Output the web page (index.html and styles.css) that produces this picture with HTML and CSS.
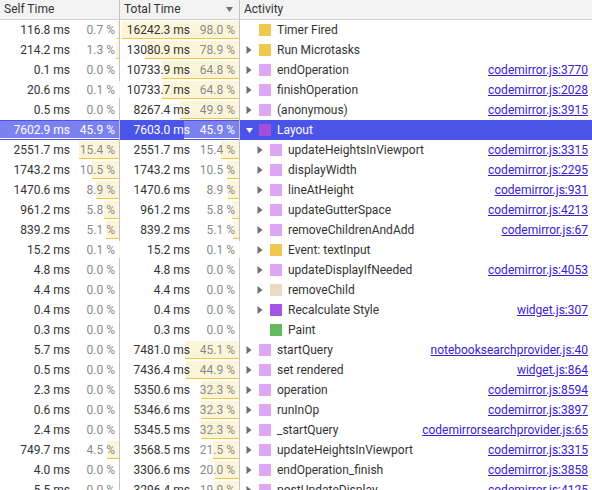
FILE: index.html
```html
<!DOCTYPE html>
<html lang="en">
<head>
    <meta charset="UTF-8">
    <title>Bottom-Up</title>
    <link rel="stylesheet" href="styles.css">
</head>
<body>
    <div class="tree">
        <div class="row head">
            <div class="cell title">Self Time</div>
            <div class="cell title sorted">Total Time
                <svg class="sort" width="7" height="5" viewBox="0 0 7 5"><path d="M0 0H7L3.5 5z"/></svg>
            </div>
            <div class="cell title">Activity</div>
        </div>

        <div class="row">
            <div class="cell num"><div class="bar" style="width:1.53%"></div><span class="ms">116.8 ms</span><span class="pct">0.7 %</span></div>
            <div class="cell num"><div class="bar" style="width:98%"></div><span class="ms">16242.3 ms</span><span class="pct">98.0 %</span></div>
            <div class="cell act"><span class="toggle"></span><span class="swatch yellow"></span><span class="name">Timer Fired</span></div>
        </div>
        <div class="row">
            <div class="cell num"><div class="bar" style="width:2.83%"></div><span class="ms">214.2 ms</span><span class="pct">1.3 %</span></div>
            <div class="cell num"><div class="bar" style="width:78.9%"></div><span class="ms">13080.9 ms</span><span class="pct">78.9 %</span></div>
            <div class="cell act"><span class="toggle"><svg width="6" height="8" viewBox="0 0 6 8"><path d="M0.5 0L5.5 4L0.5 8z"/></svg></span><span class="swatch yellow"></span><span class="name">Run Microtasks</span></div>
        </div>
        <div class="row">
            <div class="cell num"><span class="ms">0.1 ms</span><span class="pct">0.0 %</span></div>
            <div class="cell num"><div class="bar" style="width:64.8%"></div><span class="ms">10733.9 ms</span><span class="pct">64.8 %</span></div>
            <div class="cell act"><span class="toggle"><svg width="6" height="8" viewBox="0 0 6 8"><path d="M0.5 0L5.5 4L0.5 8z"/></svg></span><span class="swatch js"></span><span class="name">endOperation</span><a class="link" href="#">codemirror.js:3770</a></div>
        </div>
        <div class="row">
            <div class="cell num"><div class="bar" style="width:0.22%"></div><span class="ms">20.6 ms</span><span class="pct">0.1 %</span></div>
            <div class="cell num"><div class="bar" style="width:64.8%"></div><span class="ms">10733.7 ms</span><span class="pct">64.8 %</span></div>
            <div class="cell act"><span class="toggle"><svg width="6" height="8" viewBox="0 0 6 8"><path d="M0.5 0L5.5 4L0.5 8z"/></svg></span><span class="swatch js"></span><span class="name">finishOperation</span><a class="link" href="#">codemirror.js:2028</a></div>
        </div>
        <div class="row">
            <div class="cell num"><span class="ms">0.5 ms</span><span class="pct">0.0 %</span></div>
            <div class="cell num"><div class="bar" style="width:49.9%"></div><span class="ms">8267.4 ms</span><span class="pct">49.9 %</span></div>
            <div class="cell act"><span class="toggle"><svg width="6" height="8" viewBox="0 0 6 8"><path d="M0.5 0L5.5 4L0.5 8z"/></svg></span><span class="swatch js"></span><span class="name">(anonymous)</span><a class="link" href="#">codemirror.js:3915</a></div>
        </div>
        <div class="row selected">
            <div class="cell num"><div class="bar" style="width:100%"></div><span class="ms">7602.9 ms</span><span class="pct">45.9 %</span></div>
            <div class="cell num"><div class="bar" style="width:45.9%"></div><span class="ms">7603.0 ms</span><span class="pct">45.9 %</span></div>
            <div class="cell act"><span class="toggle"><svg width="7" height="5" viewBox="0 0 7 5"><path d="M0 0H7L3.5 5z"/></svg></span><span class="swatch layout"></span><span class="name">Layout</span></div>
        </div>
        <div class="row">
            <div class="cell num"><div class="bar" style="width:33.55%"></div><span class="ms">2551.7 ms</span><span class="pct">15.4 %</span></div>
            <div class="cell num"><div class="bar" style="width:15.4%"></div><span class="ms">2551.7 ms</span><span class="pct">15.4 %</span></div>
            <div class="cell act child"><span class="toggle"><svg width="6" height="8" viewBox="0 0 6 8"><path d="M0.5 0L5.5 4L0.5 8z"/></svg></span><span class="swatch js"></span><span class="name">updateHeightsInViewport</span><a class="link" href="#">codemirror.js:3315</a></div>
        </div>
        <div class="row">
            <div class="cell num"><div class="bar" style="width:22.88%"></div><span class="ms">1743.2 ms</span><span class="pct">10.5 %</span></div>
            <div class="cell num"><div class="bar" style="width:10.5%"></div><span class="ms">1743.2 ms</span><span class="pct">10.5 %</span></div>
            <div class="cell act child"><span class="toggle"><svg width="6" height="8" viewBox="0 0 6 8"><path d="M0.5 0L5.5 4L0.5 8z"/></svg></span><span class="swatch js"></span><span class="name">displayWidth</span><a class="link" href="#">codemirror.js:2295</a></div>
        </div>
        <div class="row">
            <div class="cell num"><div class="bar" style="width:19.39%"></div><span class="ms">1470.6 ms</span><span class="pct">8.9 %</span></div>
            <div class="cell num"><div class="bar" style="width:8.9%"></div><span class="ms">1470.6 ms</span><span class="pct">8.9 %</span></div>
            <div class="cell act child"><span class="toggle"><svg width="6" height="8" viewBox="0 0 6 8"><path d="M0.5 0L5.5 4L0.5 8z"/></svg></span><span class="swatch js"></span><span class="name">lineAtHeight</span><a class="link" href="#">codemirror.js:931</a></div>
        </div>
        <div class="row">
            <div class="cell num"><div class="bar" style="width:12.64%"></div><span class="ms">961.2 ms</span><span class="pct">5.8 %</span></div>
            <div class="cell num"><div class="bar" style="width:5.8%"></div><span class="ms">961.2 ms</span><span class="pct">5.8 %</span></div>
            <div class="cell act child"><span class="toggle"><svg width="6" height="8" viewBox="0 0 6 8"><path d="M0.5 0L5.5 4L0.5 8z"/></svg></span><span class="swatch js"></span><span class="name">updateGutterSpace</span><a class="link" href="#">codemirror.js:4213</a></div>
        </div>
        <div class="row">
            <div class="cell num"><div class="bar" style="width:11.11%"></div><span class="ms">839.2 ms</span><span class="pct">5.1 %</span></div>
            <div class="cell num"><div class="bar" style="width:5.1%"></div><span class="ms">839.2 ms</span><span class="pct">5.1 %</span></div>
            <div class="cell act child"><span class="toggle"><svg width="6" height="8" viewBox="0 0 6 8"><path d="M0.5 0L5.5 4L0.5 8z"/></svg></span><span class="swatch js"></span><span class="name">removeChildrenAndAdd</span><a class="link" href="#">codemirror.js:67</a></div>
        </div>
        <div class="row">
            <div class="cell num"><div class="bar" style="width:0.22%"></div><span class="ms">15.2 ms</span><span class="pct">0.1 %</span></div>
            <div class="cell num"><div class="bar" style="width:0.1%"></div><span class="ms">15.2 ms</span><span class="pct">0.1 %</span></div>
            <div class="cell act child"><span class="toggle"><svg width="6" height="8" viewBox="0 0 6 8"><path d="M0.5 0L5.5 4L0.5 8z"/></svg></span><span class="swatch yellow"></span><span class="name">Event: textInput</span></div>
        </div>
        <div class="row">
            <div class="cell num"><span class="ms">4.8 ms</span><span class="pct">0.0 %</span></div>
            <div class="cell num"><span class="ms">4.8 ms</span><span class="pct">0.0 %</span></div>
            <div class="cell act child"><span class="toggle"><svg width="6" height="8" viewBox="0 0 6 8"><path d="M0.5 0L5.5 4L0.5 8z"/></svg></span><span class="swatch js"></span><span class="name">updateDisplayIfNeeded</span><a class="link" href="#">codemirror.js:4053</a></div>
        </div>
        <div class="row">
            <div class="cell num"><span class="ms">4.4 ms</span><span class="pct">0.0 %</span></div>
            <div class="cell num"><span class="ms">4.4 ms</span><span class="pct">0.0 %</span></div>
            <div class="cell act child"><span class="toggle"><svg width="6" height="8" viewBox="0 0 6 8"><path d="M0.5 0L5.5 4L0.5 8z"/></svg></span><span class="swatch dom"></span><span class="name">removeChild</span></div>
        </div>
        <div class="row">
            <div class="cell num"><span class="ms">0.4 ms</span><span class="pct">0.0 %</span></div>
            <div class="cell num"><span class="ms">0.4 ms</span><span class="pct">0.0 %</span></div>
            <div class="cell act child"><span class="toggle"><svg width="6" height="8" viewBox="0 0 6 8"><path d="M0.5 0L5.5 4L0.5 8z"/></svg></span><span class="swatch style"></span><span class="name">Recalculate Style</span><a class="link" href="#">widget.js:307</a></div>
        </div>
        <div class="row">
            <div class="cell num"><span class="ms">0.3 ms</span><span class="pct">0.0 %</span></div>
            <div class="cell num"><span class="ms">0.3 ms</span><span class="pct">0.0 %</span></div>
            <div class="cell act child"><span class="toggle"></span><span class="swatch paint"></span><span class="name">Paint</span></div>
        </div>
        <div class="row">
            <div class="cell num"><span class="ms">5.7 ms</span><span class="pct">0.0 %</span></div>
            <div class="cell num"><div class="bar" style="width:45.1%"></div><span class="ms">7481.0 ms</span><span class="pct">45.1 %</span></div>
            <div class="cell act"><span class="toggle"><svg width="6" height="8" viewBox="0 0 6 8"><path d="M0.5 0L5.5 4L0.5 8z"/></svg></span><span class="swatch js"></span><span class="name">startQuery</span><a class="link" href="#">notebooksearchprovider.js:40</a></div>
        </div>
        <div class="row">
            <div class="cell num"><span class="ms">0.5 ms</span><span class="pct">0.0 %</span></div>
            <div class="cell num"><div class="bar" style="width:44.9%"></div><span class="ms">7436.4 ms</span><span class="pct">44.9 %</span></div>
            <div class="cell act"><span class="toggle"><svg width="6" height="8" viewBox="0 0 6 8"><path d="M0.5 0L5.5 4L0.5 8z"/></svg></span><span class="swatch js"></span><span class="name">set rendered</span><a class="link" href="#">widget.js:864</a></div>
        </div>
        <div class="row">
            <div class="cell num"><span class="ms">2.3 ms</span><span class="pct">0.0 %</span></div>
            <div class="cell num"><div class="bar" style="width:32.3%"></div><span class="ms">5350.6 ms</span><span class="pct">32.3 %</span></div>
            <div class="cell act"><span class="toggle"><svg width="6" height="8" viewBox="0 0 6 8"><path d="M0.5 0L5.5 4L0.5 8z"/></svg></span><span class="swatch js"></span><span class="name">operation</span><a class="link" href="#">codemirror.js:8594</a></div>
        </div>
        <div class="row">
            <div class="cell num"><span class="ms">0.6 ms</span><span class="pct">0.0 %</span></div>
            <div class="cell num"><div class="bar" style="width:32.3%"></div><span class="ms">5346.6 ms</span><span class="pct">32.3 %</span></div>
            <div class="cell act"><span class="toggle"><svg width="6" height="8" viewBox="0 0 6 8"><path d="M0.5 0L5.5 4L0.5 8z"/></svg></span><span class="swatch js"></span><span class="name">runInOp</span><a class="link" href="#">codemirror.js:3897</a></div>
        </div>
        <div class="row">
            <div class="cell num"><span class="ms">2.4 ms</span><span class="pct">0.0 %</span></div>
            <div class="cell num"><div class="bar" style="width:32.3%"></div><span class="ms">5345.5 ms</span><span class="pct">32.3 %</span></div>
            <div class="cell act"><span class="toggle"><svg width="6" height="8" viewBox="0 0 6 8"><path d="M0.5 0L5.5 4L0.5 8z"/></svg></span><span class="swatch js"></span><span class="name">_startQuery</span><a class="link" href="#">codemirrorsearchprovider.js:65</a></div>
        </div>
        <div class="row">
            <div class="cell num"><div class="bar" style="width:9.8%"></div><span class="ms">749.7 ms</span><span class="pct">4.5 %</span></div>
            <div class="cell num"><div class="bar" style="width:21.5%"></div><span class="ms">3568.5 ms</span><span class="pct">21.5 %</span></div>
            <div class="cell act"><span class="toggle"><svg width="6" height="8" viewBox="0 0 6 8"><path d="M0.5 0L5.5 4L0.5 8z"/></svg></span><span class="swatch js"></span><span class="name">updateHeightsInViewport</span><a class="link" href="#">codemirror.js:3315</a></div>
        </div>
        <div class="row">
            <div class="cell num"><span class="ms">4.0 ms</span><span class="pct">0.0 %</span></div>
            <div class="cell num"><div class="bar" style="width:20%"></div><span class="ms">3306.6 ms</span><span class="pct">20.0 %</span></div>
            <div class="cell act"><span class="toggle"><svg width="6" height="8" viewBox="0 0 6 8"><path d="M0.5 0L5.5 4L0.5 8z"/></svg></span><span class="swatch js"></span><span class="name">endOperation_finish</span><a class="link" href="#">codemirror.js:3858</a></div>
        </div>
        <div class="row">
            <div class="cell num"><span class="ms">5.5 ms</span><span class="pct">0.0 %</span></div>
            <div class="cell num"><div class="bar" style="width:19.9%"></div><span class="ms">3296.4 ms</span><span class="pct">19.9 %</span></div>
            <div class="cell act"><span class="toggle"><svg width="6" height="8" viewBox="0 0 6 8"><path d="M0.5 0L5.5 4L0.5 8z"/></svg></span><span class="swatch js"></span><span class="name">postUpdateDisplay</span><a class="link" href="#">codemirror.js:4125</a></div>
        </div>
    </div>
</body>
</html>
```

FILE: styles.css
```css
body {
    margin: 0;
    font-family: Roboto, "Liberation Sans", sans-serif;
    font-size: 12px;
    color: #333;
    background: #fff;
    overflow: hidden;
}

.tree {
    width: 592px;
    height: 490px;
    overflow: hidden;
}

.row {
    display: grid;
    grid-template-columns: 120px 120px 1fr;
    height: 20px;
    line-height: 20px;
}

.cell {
    position: relative;
    box-sizing: border-box;
    border-right: 1px solid #c4c4c4;
    white-space: nowrap;
}

.cell:last-child {
    border-right: none;
}

/* header */
.head {
    box-sizing: border-box;
    background: #f3f3f3;
    border-bottom: 1px solid #cfcfcf;
    height: 20px;
    line-height: 19px;
}

.title {
    padding-left: 4px;
    color: #333;
}

.sorted {
    display: flex;
    justify-content: space-between;
    align-items: center;
    padding-right: 6px;
}

.sort {
    fill: #6f6f6f;
}

/* number cells */
.num {
    display: flex;
    justify-content: flex-end;
    padding-right: 4px;
}

.ms, .pct {
    position: relative;
    z-index: 1;
}

.pct {
    width: 45px;
    text-align: right;
    color: #8a8a8a;
}

.bar {
    position: absolute;
    right: 0;
    top: 1px;
    bottom: 1px;
    background: #fdf5da;
    border-bottom: 1px solid #f0c53f;
}

/* activity cells */
.act {
    display: flex;
    align-items: center;
    padding-left: 6px;
    padding-right: 4px;
}

.act.child {
    padding-left: 17px;
}

.toggle {
    flex: none;
    width: 13px;
    height: 20px;
    display: flex;
    align-items: center;
}

.toggle svg {
    fill: #6e6e6e;
}

.swatch {
    flex: none;
    width: 12px;
    height: 12px;
    margin-right: 6px;
}

.yellow { background: #f0c84f; }
.js { background: #e0a6f6; }
.layout { background: #a24fdc; }
.style { background: #a555e3; }
.dom { background: #ebd9c1; }
.paint { background: #63bb5e; }

.name {
    flex: 1;
}

.link {
    color: #3a20d2;
    text-decoration: underline;
}

/* selected row */
.selected {
    background: #4a54e8;
    color: #fff;
}

.selected .pct {
    color: #fff;
}

.selected .bar {
    background: #7b82ef;
    border-bottom-color: #fff;
}

.selected .toggle svg {
    fill: #fff;
}
```
